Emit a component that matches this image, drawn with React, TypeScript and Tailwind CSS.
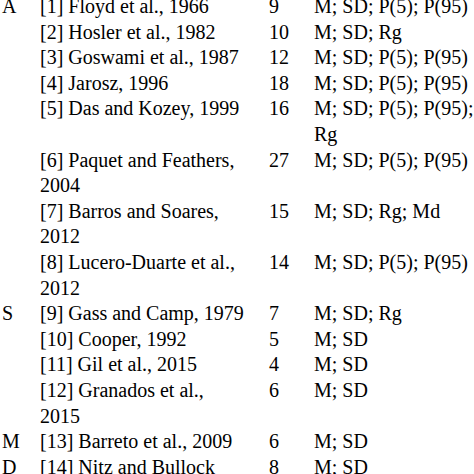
import React from 'react';

type Row = {
  group: string;
  study: string;
  n: string;
  stats: string;
};

const rows: Row[] = [
  { group: 'A', study: '[1] Floyd et al., 1966', n: '9', stats: 'M; SD; P(5); P(95)' },
  { group: '', study: '[2] Hosler et al., 1982', n: '10', stats: 'M; SD; Rg' },
  { group: '', study: '[3] Goswami et al., 1987', n: '12', stats: 'M; SD; P(5); P(95)' },
  { group: '', study: '[4] Jarosz, 1996', n: '18', stats: 'M; SD; P(5); P(95)' },
  { group: '', study: '[5] Das and Kozey, 1999', n: '16', stats: 'M; SD; P(5); P(95); Rg' },
  { group: '', study: '[6] Paquet and Feathers, 2004', n: '27', stats: 'M; SD; P(5); P(95)' },
  { group: '', study: '[7] Barros and Soares, 2012', n: '15', stats: 'M; SD; Rg; Md' },
  { group: '', study: '[8] Lucero-Duarte et al., 2012', n: '14', stats: 'M; SD; P(5); P(95)' },
  { group: 'S', study: '[9] Gass and Camp, 1979', n: '7', stats: 'M; SD; Rg' },
  { group: '', study: '[10] Cooper, 1992', n: '5', stats: 'M; SD' },
  { group: '', study: '[11] Gil et al., 2015', n: '4', stats: 'M; SD' },
  { group: '', study: '[12] Granados et al., 2015', n: '6', stats: 'M; SD' },
  { group: 'M', study: '[13] Barreto et al., 2009', n: '6', stats: 'M; SD' },
  { group: 'D', study: '[14] Nitz and Bullock', n: '8', stats: 'M; SD' },
];

const App = () => {
  return (
    <div className="w-[474px] h-[474px] overflow-hidden bg-white text-black">
      <div
        className="-mt-[6px] grid grid-cols-[40px_229px_45px_170px] text-[20px] leading-[25.6px]"
        style={{ fontFamily: '"Liberation Serif", "Times New Roman", serif' }}
      >
        {rows.map((row, i) => (
          <React.Fragment key={i}>
            <div className="pl-[2px]">{row.group}</div>
            <div className="pr-[23px]">{row.study}</div>
            <div>{row.n}</div>
            <div>{row.stats}</div>
          </React.Fragment>
        ))}
      </div>
    </div>
  );
};

export default App;
